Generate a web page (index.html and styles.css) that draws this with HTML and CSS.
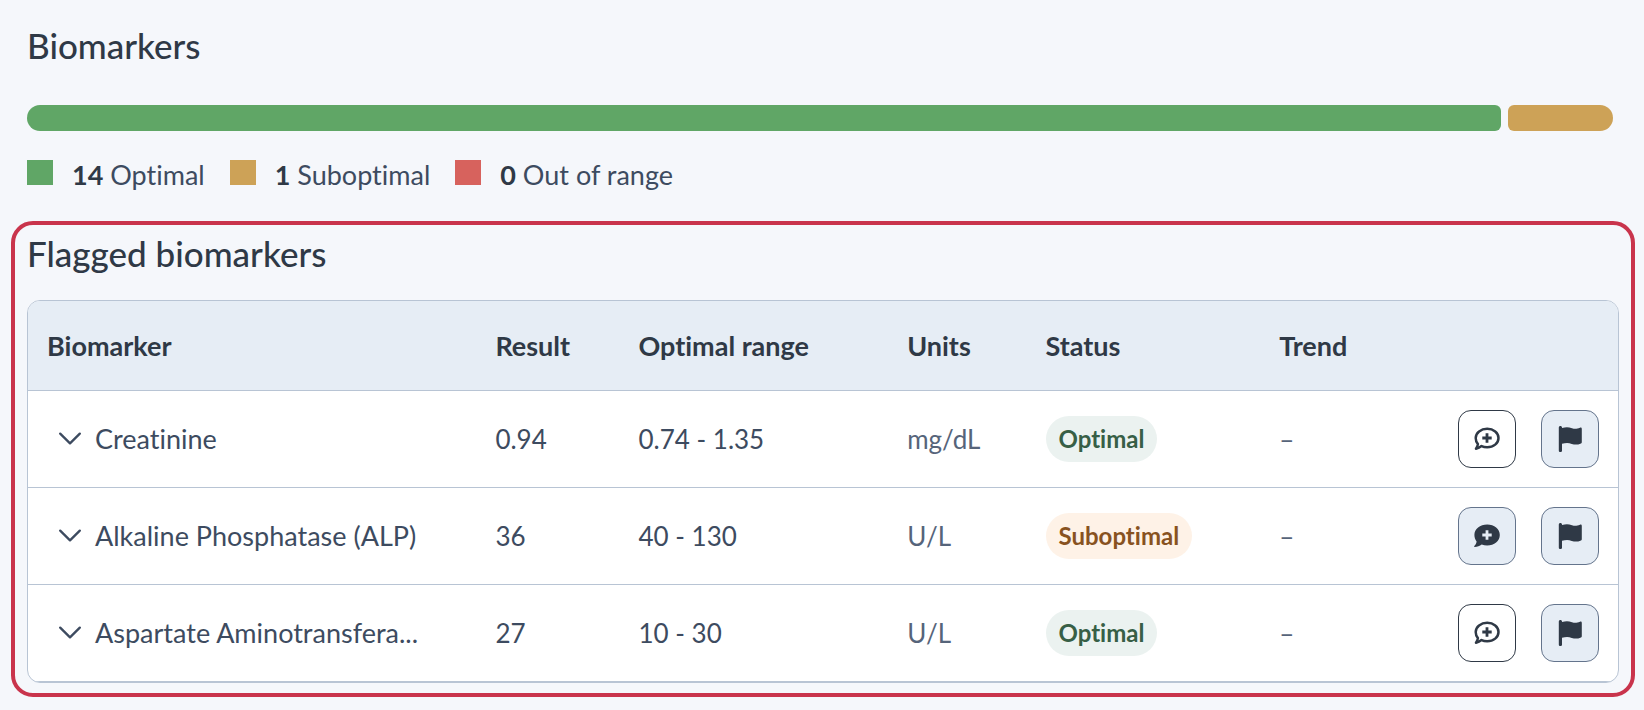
FILE: index.html
```html
<!DOCTYPE html>
<html lang="en">
<head>
<meta charset="utf-8">
<meta name="viewport" content="width=device-width, initial-scale=1">
<title>Biomarkers</title>
<link rel="stylesheet" href="styles.css">
</head>
<body>
<svg class="symbols" aria-hidden="true">
  <symbol id="chevron" viewBox="0 0 22 14"><path d="M1.2 1.600 11 11.400 20.800 1.600" fill="none" stroke="currentColor" stroke-width="2.300" stroke-linecap="round" stroke-linejoin="round"/></symbol>
  <symbol id="comment" viewBox="0 0 26 26"><path d="M13.200 2.800c6.300 0 11.300 4 11.300 9.200s-5 9.300-11.300 9.300c-2.100 0-4-.4-5.700-1.200-1.500 1.200-3.400 2.100-5.500 2.600 1-1.500 1.700-3 1.900-4.600C2.500 16.400 1.700 14.300 1.700 12c0-5.200 5.200-9.200 11.500-9.200Z" fill="none" stroke="currentColor" stroke-width="2.500" stroke-linejoin="round"/><path d="M13 7.300v9.400M8.300 12h9.400" stroke="currentColor" stroke-width="2.800"/></symbol>
  <symbol id="comment-solid" viewBox="0 0 26 26"><path fill-rule="evenodd" fill="currentColor" d="M13.200 1.500C20.300 1.500 25.800 6.100 25.800 12s-5.500 10.500-12.600 10.500c-2 0-3.800-.3-5.500-1C5.700 23 3.300 24 .7 24.100c-.6 0-.8-.6-.4-1 1.300-1.400 2.100-3 2.300-4.700C1.200 16.600.4 14.400.4 12 .4 6.100 6.100 1.500 13.200 1.500ZM11.600 7.300v3.300H8.300v2.800h3.300v3.300h2.800v-3.300h3.300v-2.800h-3.300V7.300Z"/></symbol>
  <symbol id="flag" viewBox="0 0 26 26"><path fill="currentColor" d="M3.400 0C4.300 0 5 .7 5 1.600v.5c4.200-1.100 6.600-.9 10 .2 3 1 5 .6 8-.6.900-.4 1.800.2 1.800 1.200v13.300c0 .6-.3 1-.8 1.200-3.500 1.500-6 1.500-9.200.5-3.200-1.100-5.700-1.200-9.800-.1v6.600c0 .9-.7 1.600-1.600 1.600s-1.600-.7-1.600-1.600V1.600C1.800.7 2.500 0 3.400 0Z"/></symbol>
</svg>
<main class="page">
  <section class="summary">
    <h1 class="title">Biomarkers</h1>
    <div class="bar" role="img" aria-label="14 optimal, 1 suboptimal">
      <span class="bar-part bar-optimal"></span>
      <span class="bar-part bar-suboptimal"></span>
    </div>
    <ul class="legend">
      <li class="legend-item"><span class="swatch swatch-optimal"></span><span><strong>14</strong> Optimal</span></li>
      <li class="legend-item"><span class="swatch swatch-suboptimal"></span><span><strong>1</strong> Suboptimal</span></li>
      <li class="legend-item"><span class="swatch swatch-out"></span><span><strong>0</strong> Out of range</span></li>
    </ul>
  </section>
  <section class="flagged">
    <h2 class="title">Flagged biomarkers</h2>
    <div class="table-frame">
      <table class="table">
        <colgroup><col class="col-name"><col class="col-result"><col class="col-range"><col class="col-units"><col class="col-status"><col class="col-trend"><col></colgroup>
        <thead>
          <tr><th scope="col">Biomarker</th><th scope="col">Result</th><th scope="col">Optimal range</th><th scope="col">Units</th><th scope="col">Status</th><th scope="col">Trend</th><td></td></tr>
        </thead>
        <tbody>
          <tr>
            <td><button class="name" type="button"><svg class="chevron"><use href="#chevron"/></svg><span>Creatinine</span></button></td>
            <td class="number">0.94</td><td class="number">0.74 - 1.35</td><td class="units">mg/dL</td>
            <td><span class="badge badge-optimal">Optimal</span></td><td class="units">–</td>
            <td><div class="actions"><button class="action" type="button" aria-label="Add comment"><svg class="icon"><use href="#comment"/></svg></button><button class="action action-active" type="button" aria-label="Remove flag"><svg class="icon"><use href="#flag"/></svg></button></div></td>
          </tr>
          <tr>
            <td><button class="name" type="button"><svg class="chevron"><use href="#chevron"/></svg><span>Alkaline Phosphatase (ALP)</span></button></td>
            <td class="number">36</td><td class="number">40 - 130</td><td class="units">U/L</td>
            <td><span class="badge badge-suboptimal">Suboptimal</span></td><td class="units">–</td>
            <td><div class="actions"><button class="action action-active" type="button" aria-label="Edit comment"><svg class="icon"><use href="#comment-solid"/></svg></button><button class="action action-active" type="button" aria-label="Remove flag"><svg class="icon"><use href="#flag"/></svg></button></div></td>
          </tr>
          <tr>
            <td><button class="name" type="button"><svg class="chevron"><use href="#chevron"/></svg><span>Aspartate Aminotransfera...</span></button></td>
            <td class="number">27</td><td class="number">10 - 30</td><td class="units">U/L</td>
            <td><span class="badge badge-optimal">Optimal</span></td><td class="units">–</td>
            <td><div class="actions"><button class="action" type="button" aria-label="Add comment"><svg class="icon"><use href="#comment"/></svg></button><button class="action action-active" type="button" aria-label="Remove flag"><svg class="icon"><use href="#flag"/></svg></button></div></td>
          </tr>
        </tbody>
      </table>
    </div>
  </section>
</main>
</body>
</html>
```
FILE: styles.css
```css
* { box-sizing: border-box; }

body {
  margin: 0;
  background: #f5f7fb;
  color: #3d4b60;
  font-family: Lato, "Open Sans", sans-serif;
  font-size: 27px;
  font-variant-ligatures: none;
  line-height: 32px;
}

.symbols { display: none; }

.page { padding: 25px 9px 13px 11px; }

.summary { padding: 0 22px 0 16px; }

.title {
  margin: 0;
  color: #2f3946;
  font-size: 35px;
  font-weight: 500;
  line-height: 40px;
}

.bar {
  display: flex;
  gap: 7px;
  height: 26px;
  margin-top: 40px;
}

.bar-part { border-radius: 6px; }
.bar-optimal { flex: 14; background: #60a666; border-radius: 13px 6px 6px 13px; }
.bar-suboptimal { flex: 1; background: #cda257; border-radius: 6px 13px 13px 6px; }

.legend {
  display: flex;
  flex-wrap: wrap;
  gap: 25px;
  margin: 28px 0 0;
  padding: 0;
  list-style: none;
}

.legend-item { display: flex; align-items: baseline; gap: 19px; }
.legend strong { color: #2f3946; font-weight: 700; }

.swatch { width: 26px; height: 25px; }
.swatch-optimal { background: #60a666; }
.swatch-suboptimal { background: #cda257; }
.swatch-out { background: #d7625d; }

.flagged {
  margin-top: 30px;
  padding: 8px 12px 10px;
  border: 4px solid #c9344c;
  border-radius: 22px;
}

.table-frame {
  margin-top: 27px;
  overflow: hidden;
  border: 1px solid #b8c4d4;
  border-radius: 13px;
  background: #fff;
}

.table {
  width: 100%;
  table-layout: fixed;
  border-collapse: separate;
  border-spacing: 0;
}

.col-name { width: 28.2%; }
.col-result { width: 9%; }
.col-range { width: 16.9%; }
.col-units { width: 8.7%; }
.col-status { width: 14.7%; }
.col-trend { width: 11%; }

th, td {
  height: 97px;
  padding: 0 19px;
  border-bottom: 1px solid #b8c4d4;
  text-align: left;
  white-space: nowrap;
}

thead th, thead td {
  height: 90px;
  background: #e6edf5;
  color: #2f3946;
  font-weight: 700;
}

.number, .units { font-size: 26px; }
.units { color: #56647a; }

button { font: inherit; color: inherit; cursor: pointer; }

.name {
  display: flex;
  align-items: center;
  gap: 14px;
  padding: 0 0 0 12px;
  border: 0;
  background: none;
}

.chevron { width: 22px; height: 14px; }

.badge {
  display: inline-block;
  padding: 7px 13px;
  border-radius: 23px;
  font-size: 24px;
  font-weight: 700;
  vertical-align: middle;
}

.badge-optimal { background: #ebf2f0; color: #375f46; }
.badge-suboptimal { background: #fef2e7; color: #88521f; }

.actions { display: flex; justify-content: flex-end; gap: 25px; }

.action {
  display: grid;
  place-items: center;
  width: 58px;
  height: 58px;
  padding: 0;
  border: 1px solid #2f3946;
  border-radius: 13px;
  background: #fff;
  color: #2f3946;
}

.action-active { border-color: #64748c; background: #e6edf5; }

.icon { width: 26px; height: 26px; }
```
